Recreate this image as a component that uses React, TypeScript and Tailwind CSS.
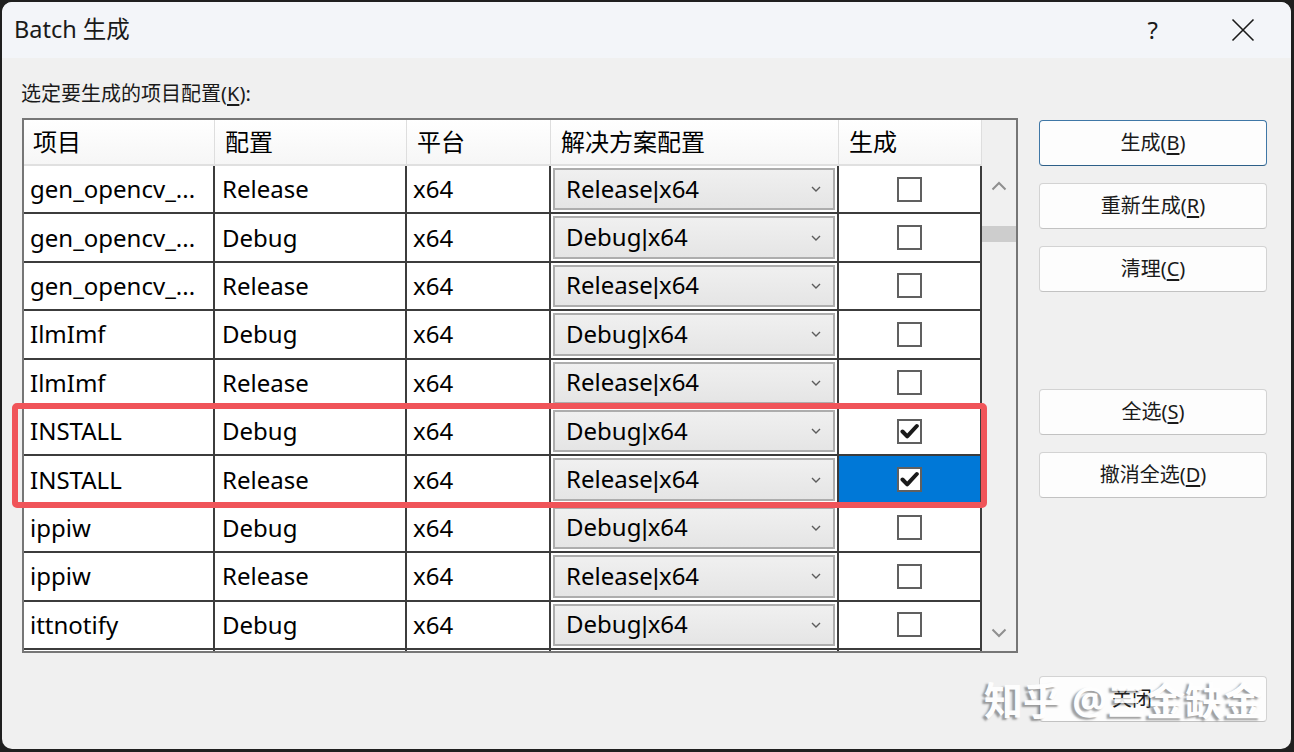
import React from 'react'

type Row = {
  name: string;
  config: string;
  sln: string;
  build: boolean;
  selected?: boolean;
};

const rows: Row[] = [
  { name: 'gen_opencv_...', config: 'Release', sln: 'Release|x64', build: false },
  { name: 'gen_opencv_...', config: 'Debug', sln: 'Debug|x64', build: false },
  { name: 'gen_opencv_...', config: 'Release', sln: 'Release|x64', build: false },
  { name: 'IlmImf', config: 'Debug', sln: 'Debug|x64', build: false },
  { name: 'IlmImf', config: 'Release', sln: 'Release|x64', build: false },
  { name: 'INSTALL', config: 'Debug', sln: 'Debug|x64', build: true },
  { name: 'INSTALL', config: 'Release', sln: 'Release|x64', build: true, selected: true },
  { name: 'ippiw', config: 'Debug', sln: 'Debug|x64', build: false },
  { name: 'ippiw', config: 'Release', sln: 'Release|x64', build: false },
  { name: 'ittnotify', config: 'Debug', sln: 'Debug|x64', build: false },
];

const ScrollArrow = ({ up }: { up?: boolean }) => (
  <svg width="16" height="10" viewBox="0 0 16 10">
    <path d={up ? 'M1.5 8.5 L8 2 L14.5 8.5' : 'M1.5 1.5 L8 8 L14.5 1.5'} fill="none" stroke="#8f8f8f" strokeWidth="2" />
  </svg>
)

const Check = ({ on }: { on: boolean }) => (
  <div className="w-[25px] h-[25px] border-2 border-[#606060] bg-white flex items-center justify-center">
    {on && (
      <svg width="19" height="17" viewBox="0 0 19 17">
        <path d="M2.5 8.5 L7.2 13.3 L16.8 3" fill="none" stroke="#1a1a1a" strokeWidth="4" strokeLinecap="round" strokeLinejoin="round" />
      </svg>
    )}
  </div>
)

const Btn = ({ label, hot, focus, className = '' }: { label: string; hot?: string; focus?: boolean; className?: string }) => (
  <div
    className={`h-[46px] w-[228px] rounded-[4px] border bg-[#fdfdfd] flex items-center justify-center text-[20px] text-[#1a1a1a] ${
      focus ? 'border-[#3f77a6] border-b-[#2d5f88]' : 'border-[#d3d3d3] border-b-[#c2c2c2]'
    } ${className}`}
  >
    <span>
      {label}
      {hot && (
        <>
          (<span className="underline underline-offset-[3px]">{hot}</span>)
        </>
      )}
    </span>
  </div>
)

// "Release|x64" - the bar is narrow in the reference, so it gets a narrower font
const SlnText = ({ text }: { text: string }) => {
  const [a, b] = text.split('|')
  return (
    <span className="whitespace-nowrap">
      {a}
      <span className="font-['Liberation_Sans',sans-serif]">|</span>
      {b}
    </span>
  )
}

export default function App() {
  return (
    <div className="relative w-[1294px] h-[752px] bg-[#1f1f1f] pt-[2px] pl-[2px] pr-[3px] pb-[3px] font-['Noto_Sans','Noto_Sans_CJK_SC',sans-serif] overflow-hidden">
      <div className="h-full w-full rounded-[10px] bg-[#f0f0f0] overflow-hidden flex flex-col">
        {/* title bar */}
        <div className="h-[56px] bg-[#f3f5f9] flex items-center pl-[12px] shrink-0">
          <span className="text-[23.5px] text-[#1a1a1a]">Batch 生成</span>
          <span className="ml-auto text-[24px] text-[#1a1a1a] mr-[73px]">?</span>
          <svg width="24" height="24" viewBox="0 0 24 24" className="mr-[36px]">
            <path d="M1.5 1.5 L22.5 22.5 M22.5 1.5 L1.5 22.5" stroke="#1a1a1a" strokeWidth="1.6" />
          </svg>
        </div>

        <div className="flex flex-1">
          {/* left column */}
          <div className="pl-[19px] pt-[22px]">
            <div className="h-[28px] leading-[28px] text-[20px] text-[#1a1a1a]">
              选定要生成的项目配置(<span className="underline underline-offset-[3px]">K</span>):
            </div>
            <div className="mt-[10px] ml-px w-[996px] h-[535px] border-2 border-[#767676] bg-[#f0f0f0] flex overflow-hidden">
              <div className="w-[958px] flex flex-col text-[24px] text-black">
                {/* header */}
                <div className="h-[46px] shrink-0 flex bg-gradient-to-b from-white to-[#f6f6f6] border-b-2 border-[#e0e0e0]">
                  <div className="w-[191px] pl-[9px] flex items-center border-r border-[#dedede]">项目</div>
                  <div className="w-[192px] pl-[10px] flex items-center border-r border-[#dedede]">配置</div>
                  <div className="w-[144px] pl-[10px] flex items-center border-r border-[#dedede]">平台</div>
                  <div className="w-[288px] pl-[10px] flex items-center border-r border-[#dedede]">解决方案配置</div>
                  <div className="w-[143px] pl-[10px] flex items-center border-r border-[#dedede]">生成</div>
                </div>
                {rows.map((r, i) => (
                  <div key={i} className="h-[48.4px] shrink-0 flex bg-white border-b-2 border-[#3c3c3c]">
                    <div className="w-[191px] pl-[6px] flex items-center border-r-2 border-[#3c3c3c] whitespace-nowrap">{r.name}</div>
                    <div className="w-[192px] pl-[7px] flex items-center border-r-2 border-[#3c3c3c]">{r.config}</div>
                    <div className="w-[144px] pl-[6px] flex items-center border-r-2 border-[#3c3c3c]">x64</div>
                    <div className="w-[288px] p-[2px] flex border-r-2 border-[#3c3c3c]">
                      <div className="flex-1 flex items-center border-2 border-[#adadad] bg-gradient-to-b from-[#f0f0f0] to-[#e5e5e5] pl-[11px] pr-[12px]">
                        <SlnText text={r.sln} />
                        <svg width="10" height="6" viewBox="0 0 10 6" className="ml-auto">
                          <path d="M1 1 L5 5 L9 1" fill="none" stroke="#5c5c5c" strokeWidth="1.4" />
                        </svg>
                      </div>
                    </div>
                    <div
                      className={`w-[143px] flex items-center justify-center border-r-2 border-[#3c3c3c] ${
                        r.selected ? 'bg-[#0078d7]' : ''
                      }`}
                    >
                      <Check on={r.build} />
                    </div>
                  </div>
                ))}
                {/* next row, just peeking in */}
                <div className="h-[20px] shrink-0 flex bg-white">
                  <div className="w-[191px] border-r-2 border-[#3c3c3c]" />
                  <div className="w-[192px] border-r-2 border-[#3c3c3c]" />
                  <div className="w-[144px] border-r-2 border-[#3c3c3c]" />
                  <div className="w-[288px] border-r-2 border-[#3c3c3c]" />
                  <div className="w-[143px] border-r-2 border-[#3c3c3c]" />
                </div>
              </div>
              {/* scrollbar */}
              <div className="w-[34px] flex flex-col items-center bg-[#f0f0f0]">
                <div className="h-[46px]" />
                <div className="h-[40px] flex items-center justify-center">
                  <ScrollArrow up />
                </div>
                <div className="mt-[20px] h-[16px] w-full bg-[#cdcdcd]" />
                <div className="mt-auto h-[36px] flex items-center justify-center">
                  <ScrollArrow />
                </div>
              </div>
            </div>
          </div>

          {/* right column */}
          <div className="ml-[21px] pt-[62px] flex flex-col">
            <Btn label="生成" hot="B" focus />
            <Btn label="重新生成" hot="R" className="mt-[17px]" />
            <Btn label="清理" hot="C" className="mt-[17px]" />
            <Btn label="全选" hot="S" className="mt-[97px]" />
            <Btn label="撤消全选" hot="D" className="mt-[17px]" />
            <div className="mt-[178px] h-[46px] w-[228px] rounded-[4px] border border-[#d3d3d3] border-b-[#c2c2c2] bg-[#fdfdfd] flex items-center justify-center pr-[42px] text-[20px] text-[#1a1a1a]">
              关闭
            </div>
          </div>
        </div>
      </div>

      {/* highlight box */}
      <div className="absolute left-[12px] top-[403px] w-[975px] h-[105px] border-[6px] border-[#f05459] rounded-[5px]" />

      {/* watermark */}
      <div className="absolute left-[984px] top-[676px] h-[48px] leading-[48px] text-[39px] font-bold text-white whitespace-nowrap [text-shadow:-3px_2px_2px_rgba(80,80,80,0.6)] opacity-90">
        知乎 @三金缺金
      </div>
    </div>
  )
}
